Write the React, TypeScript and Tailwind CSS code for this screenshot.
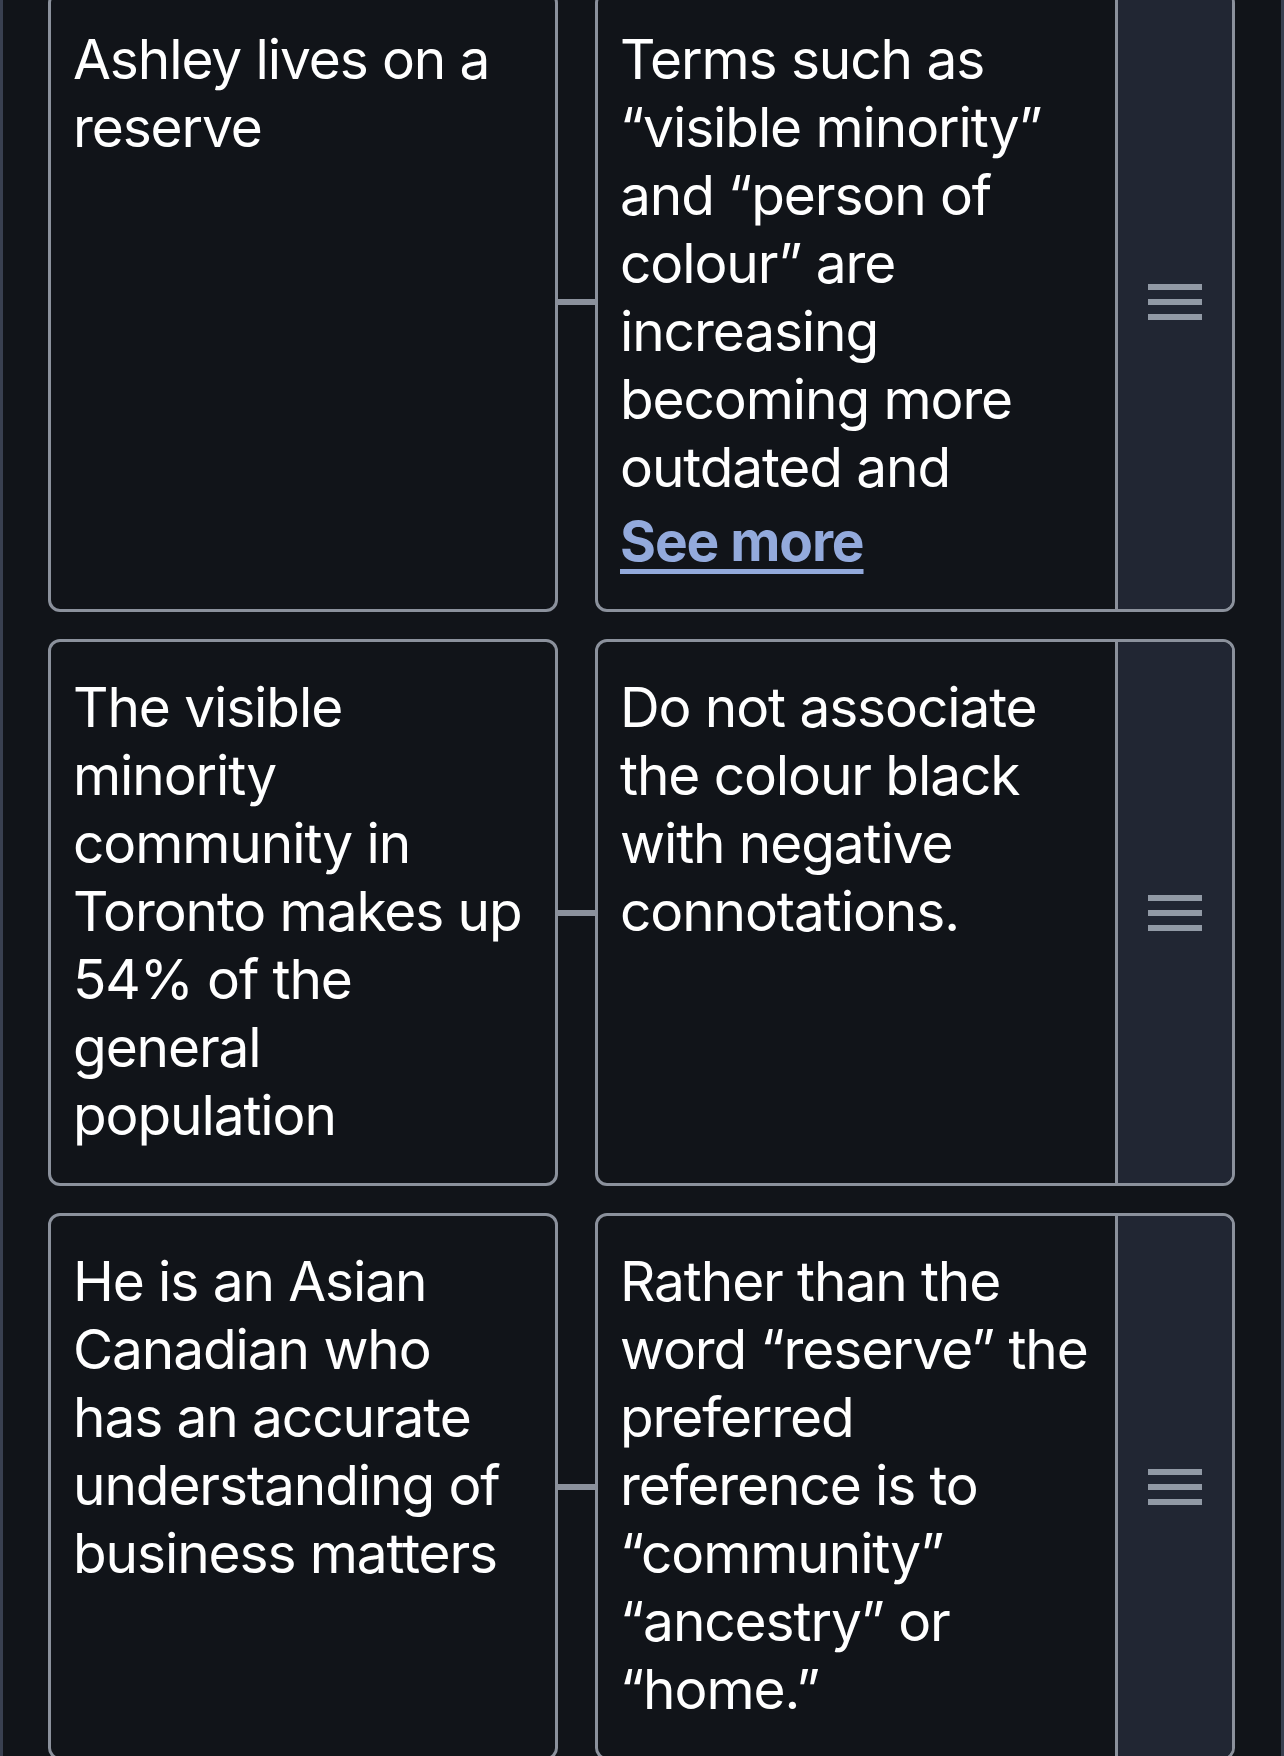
import React from 'react';

type Pair = {
  left: string;
  right: string;
  more?: boolean;
};

const pairs: Pair[] = [
  {
    left: 'Ashley lives on a reserve',
    right: 'Terms such as “visible minority” and “person of colour” are increasing becoming more outdated and',
    more: true,
  },
  {
    left: 'The visible minority community in Toronto makes up 54% of the general population',
    right: 'Do not associate the colour black with negative connotations.',
  },
  {
    left: 'He is an Asian Canadian who has an accurate understanding of business matters',
    right: 'Rather than the word “reserve” the preferred reference is to “community” “ancestry” or “home.”',
  },
];

const DragHandle: React.FC = () => (
  <div className="flex flex-col gap-[9px]">
    <span className="block w-[54px] h-[6px] bg-[#9199a5]" />
    <span className="block w-[54px] h-[6px] bg-[#9199a5]" />
    <span className="block w-[54px] h-[6px] bg-[#9199a5]" />
  </div>
);

const MatchRow: React.FC<{ pair: Pair }> = ({ pair }) => {
  return (
    <div className="flex items-stretch">
      <div className="w-[510px] shrink-0 rounded-[12px] border-[3px] border-[#8b919c] bg-[#111419] pl-[22px] pr-[29px] pt-[31px] pb-[34px]">
        <p>{pair.left}</p>
      </div>
      <div className="w-[37px] shrink-0 flex items-center">
        <div className="w-full h-[6px] bg-[#8b919c]" />
      </div>
      <div className="flex-1 flex rounded-[12px] border-[3px] border-[#8b919c] bg-[#111419] overflow-hidden">
        <div className="flex-1 pl-[22px] pr-[16px] pt-[31px] pb-[34px]">
          <p>{pair.right}</p>
          {pair.more && (
            <a
              href="#"
              className="block mt-[6px] font-bold text-[#93aadc] underline decoration-[5px] underline-offset-[8px]"
            >
              See more
            </a>
          )}
        </div>
        <div className="w-[117px] shrink-0 border-l-[3px] border-[#8b919c] bg-[#212633] flex items-center justify-center">
          <DragHandle />
        </div>
      </div>
    </div>
  );
};

const App: React.FC = () => {
  return (
    <div className="min-h-screen h-[1756px] overflow-hidden bg-[#111419] border-x-[3px] border-[#394050] font-['Inter','Noto_Sans',sans-serif] text-white text-[55px] leading-[68px] tracking-[-0.02em]">
      <div className="-mt-[9px] pl-[45px] pr-[46px] flex flex-col gap-[27px]">
        {pairs.map((pair, i) => (
          <MatchRow key={i} pair={pair} />
        ))}
      </div>
    </div>
  );
};

export default App;
